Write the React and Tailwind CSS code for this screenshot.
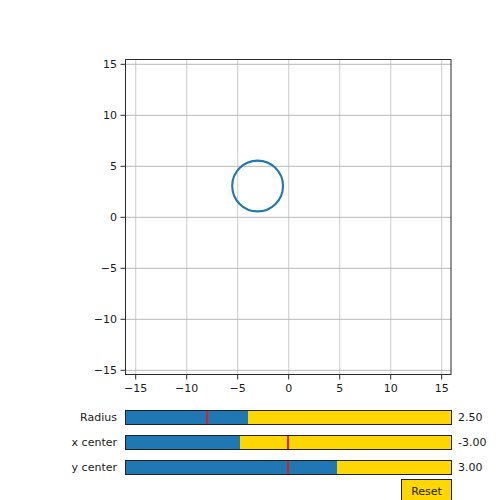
import React from 'react'

const font = { fontFamily: '"DejaVu Sans", Verdana, sans-serif' }

const X0 = 288.7
const Y0 = 217.3
const K = 10.2
const ticks = [-15, -10, -5, 0, 5, 10, 15]
const fmt = (v) => (v < 0 ? '\u2212' + Math.abs(v) : String(v))

function Plot() {
  return (
    <svg width="500" height="400" className="block" style={font}>
      {/* grid */}
      {ticks.map((v) => (
        <line key={'gx' + v} x1={X0 + v * K} x2={X0 + v * K} y1="59.5" y2="374.5" stroke="#cfcfcf" strokeWidth="1.1" />
      ))}
      {ticks.map((v) => (
        <line key={'gy' + v} x1="125.5" x2="451" y1={Y0 - v * K} y2={Y0 - v * K} stroke="#b8b8b8" strokeWidth="1" />
      ))}
      {/* circle */}
      <circle cx="257.6" cy="186" r="25.4" fill="none" stroke="#1f77b4" strokeWidth="2.1" />
      {/* spines */}
      <rect x="125.5" y="59.5" width="325.5" height="315" fill="none" stroke="#2b2b2b" strokeWidth="1" />
      {/* x ticks */}
      {ticks.map((v) => (
        <g key={'tx' + v}>
          <line x1={X0 + v * K} x2={X0 + v * K} y1="374.5" y2="379.5" stroke="#2b2b2b" strokeWidth="1" />
          <text x={X0 + v * K} y="392" fontSize="11" textAnchor="middle" fill="#1a1a1a">{fmt(v)}</text>
        </g>
      ))}
      {/* y ticks */}
      {ticks.map((v) => (
        <g key={'ty' + v}>
          <line x1="120.5" x2="125.5" y1={Y0 - v * K} y2={Y0 - v * K} stroke="#2b2b2b" strokeWidth="1" />
          <text x="117" y={Y0 - v * K + 4} fontSize="11" textAnchor="end" fill="#1a1a1a">{fmt(v)}</text>
        </g>
      ))}
    </svg>
  )
}

function SliderRow({ label, fill, mark, value }) {
  return (
    <div className="flex items-center h-[15px]">
      <div className="w-[125px] pr-[8px] text-right text-[11px] leading-none text-[#1a1a1a]">{label}</div>
      <div className="relative w-[327px] h-[15px] border border-[#222] bg-[#ffd700] box-border">
        <div className="h-full bg-[#1f77b4]" style={{ width: fill }} />
        <div className="absolute z-10 top-0 bottom-0 w-[1.5px] bg-[#e0201c]" style={{ left: mark }} />
      </div>
      <div className="ml-[6px] text-[11px] leading-none text-[#1a1a1a]">{value}</div>
    </div>
  )
}

export default function App() {
  return (
    <div className="w-[500px] h-[500px] overflow-hidden bg-white" style={font}>
      <Plot />
      <div className="flex flex-col gap-[10px] pt-[10px]">
        <SliderRow label="Radius" fill={122} mark={80} value="2.50" />
        <SliderRow label="x center" fill={114} mark={161} value="-3.00" />
        <SliderRow label="y center" fill={211} mark={161} value="3.00" />
      </div>
      <div className="w-[452px] flex justify-end mt-[4px]">
        <button className="w-[51px] h-[24px] border border-[#222] bg-[#ffd700] text-[11px] text-[#1a1a1a] flex items-start justify-center pt-[4px]">
          Reset
        </button>
      </div>
    </div>
  )
}
